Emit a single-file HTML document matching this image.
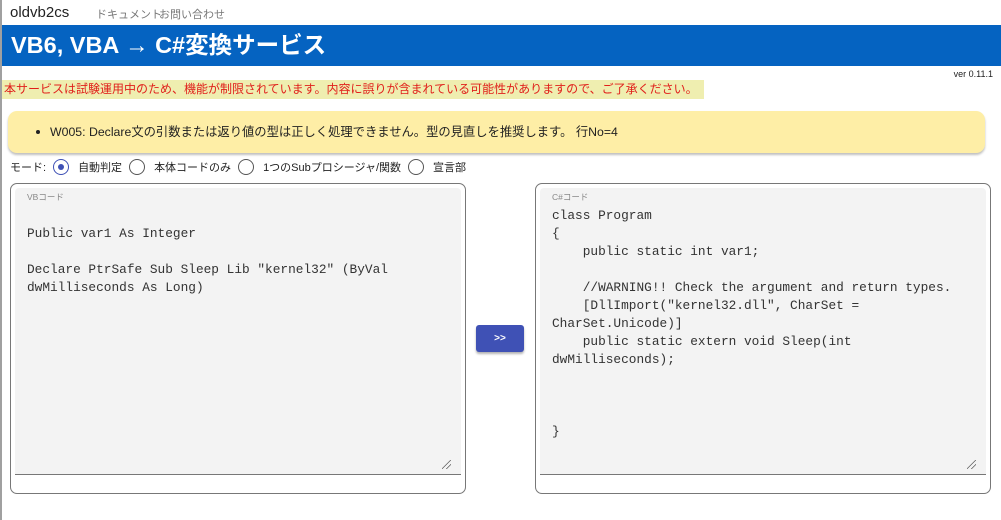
<!DOCTYPE html>
<html><head><meta charset="utf-8"><style>
*{box-sizing:border-box;margin:0;padding:0}
body{width:1001px;height:520px;overflow:hidden;background:#fff;font-family:"Liberation Sans","Noto Sans CJK JP",sans-serif;position:relative}
.abs{position:absolute;white-space:nowrap}
.lb{left:0;top:0;width:2px;height:520px;background:#a0a0a0}
.brand{left:10px;top:4px;font-size:15px;color:#222}
.nl{top:6px;font-size:11px;color:#777}
.hdr{left:2px;top:25px;width:999px;height:41px;background:#0563c1;color:#fff;font-weight:bold;font-size:23.5px;padding:5px 0 0 9px;line-height:30px}
.ver{right:8px;top:69px;font-size:9px;color:#222}
.note{left:2px;top:80px;width:702px;height:19px;background:#efeeb0;color:#e0201b;font-size:12px;line-height:19px;padding-left:2px}
.alert{left:8px;top:111px;width:977px;height:42px;background:#feeea6;border-radius:9px;box-shadow:0 2px 2px rgba(0,0,0,.25);font-size:12.3px;color:#222;line-height:42px;padding-left:28px}
.alert:before{content:"";position:absolute;left:28px;top:19px;width:4px;height:4px;border-radius:2px;background:#222}
.alert span{margin-left:14px}
.mode{top:159px;left:10px;font-size:11px;color:#222;display:flex;align-items:center;height:16px}
.r{width:16px;height:16px;border-radius:50%;border:1.5px solid #555;margin:0 9px 0 0;position:relative;display:inline-block}
.r.on{border-color:#3f51b5}
.r.on:after{content:"";position:absolute;left:3.5px;top:3.5px;width:6px;height:6px;border-radius:50%;background:#3f51b5}
.lab{margin-right:7px}
.panel{top:183px;width:456px;height:311px;border:1px solid #777;border-radius:7px}
.ta{position:absolute;left:4px;top:4px;right:4px;height:287px;background:#f3f3f3;border-bottom:1px solid #777;border-radius:4px 4px 0 0}
.cap{position:absolute;left:12px;top:3px;font-size:8.5px;color:#888}
pre{position:absolute;left:12px;font-family:"Liberation Mono",monospace;font-size:12.8px;line-height:18px;color:#333}
.grip{position:absolute;right:10px;bottom:5px;width:9px;height:9px;background:linear-gradient(135deg,transparent 45%,#666 46%,#666 52%,transparent 53%,transparent 70%,#666 71%,#666 77%,transparent 78%)}
.btn{left:476px;top:325px;width:48px;height:27px;background:#3f51b5;border-radius:3px;box-shadow:0 2px 2px rgba(0,0,0,.3);color:#fff;font-size:10px;font-weight:bold;text-align:center;line-height:27px}
</style></head><body>
<div class="abs lb"></div>
<div class="abs brand">oldvb2cs</div>
<div class="abs nl" style="left:96px">ドキュメント</div>
<div class="abs nl" style="left:159px">お問い合わせ</div>
<div class="abs hdr">VB6, VBA <span style="font-weight:normal">→</span> C#変換サービス</div>
<div class="abs ver">ver 0.11.1</div>
<div class="abs note">本サービスは試験運用中のため、機能が制限されています。内容に誤りが含まれている可能性がありますので、ご了承ください。</div>
<div class="abs alert"><span>W005: Declare文の引数または返り値の型は正しく処理できません。型の見直しを推奨します。 行No=4</span></div>
<div class="abs mode"><span style="margin-right:7px">モード:</span><i class="r on"></i><span class="lab">自動判定</span><i class="r"></i><span class="lab">本体コードのみ</span><i class="r"></i><span class="lab">1つのSubプロシージャ/関数</span><i class="r"></i><span class="lab">宣言部</span></div>
<div class="abs panel" style="left:10px"><div class="ta"><div class="cap">VBコード</div><pre style="top:37px">Public var1 As Integer

Declare PtrSafe Sub Sleep Lib "kernel32" (ByVal
dwMilliseconds As Long)</pre><div class="grip"></div></div></div>
<div class="abs btn">&gt;&gt;</div>
<div class="abs panel" style="left:535px"><div class="ta"><div class="cap">C#コード</div><pre style="top:19px">class Program
{
    public static int var1;

    //WARNING!! Check the argument and return types.
    [DllImport("kernel32.dll", CharSet =
CharSet.Unicode)]
    public static extern void Sleep(int
dwMilliseconds);



}</pre><div class="grip"></div></div></div>
</body></html>
